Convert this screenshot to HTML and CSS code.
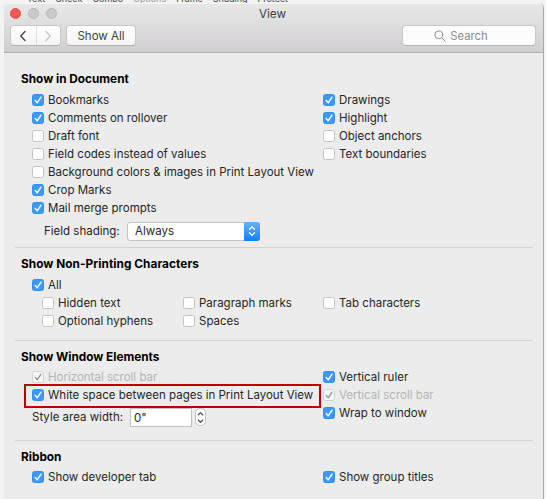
FILE: index.html
```
<!DOCTYPE html>
<html lang="en">
<head>
<meta charset="utf-8">
<title>View</title>
<link rel="stylesheet" href="styles.css">
</head>
<body>
<svg width="0" height="0" class="defs"><symbol id="tick" viewBox="0 0 12 12"><path d="M3.2 6.4 5.2 8.8 9 3.2" fill="none" stroke="currentColor" stroke-width="1.4" stroke-linecap="round" stroke-linejoin="round"/></symbol></svg>
<div class="backdrop"><span>Text</span><span>Check</span><span>Combo</span><span class="dim">Options</span><span>Frame</span><span>Shading</span><span>Protect</span></div>
<div class="window">
  <header class="titlebar">
    <div class="caption"><div class="lights"><i class="close"></i><i></i><i></i></div><h1>View</h1></div>
    <div class="toolbar">
      <div class="nav">
        <button><svg width="8" height="12" viewBox="0 0 8 12"><path d="M6 1.5 1.8 6 6 10.5"/></svg></button>
        <button class="off"><svg width="8" height="12" viewBox="0 0 8 12"><path d="M2 1.5 6.2 6 2 10.5"/></svg></button>
      </div>
      <button class="show-all">Show All</button>
      <div class="search"><svg width="12" height="12" viewBox="0 0 12 12"><circle cx="4.8" cy="4.8" r="3.9"/><path d="M7.7 7.7 11.2 11.2"/></svg><span>Search</span></div>
    </div>
  </header>
  <main>
    <section class="document">
      <h2>Show in Document</h2>
      <div class="cols">
        <div>
          <label class="on"><b><svg><use href="#tick"/></svg></b><span>Bookmarks</span></label>
          <label class="on"><b><svg><use href="#tick"/></svg></b><span>Comments on rollover</span></label>
          <label><b></b><span>Draft font</span></label>
          <label><b></b><span>Field codes instead of values</span></label>
          <label><b></b><span>Background colors &amp; images in Print Layout View</span></label>
          <label class="on"><b><svg><use href="#tick"/></svg></b><span>Crop Marks</span></label>
          <label class="on"><b><svg><use href="#tick"/></svg></b><span>Mail merge prompts</span></label>
        </div>
        <div>
          <label class="on"><b><svg><use href="#tick"/></svg></b><span>Drawings</span></label>
          <label class="on"><b><svg><use href="#tick"/></svg></b><span>Highlight</span></label>
          <label><b></b><span>Object anchors</span></label>
          <label><b></b><span>Text boundaries</span></label>
        </div>
      </div>
      <div class="shading"><span>Field shading:</span><div class="select"><span>Always</span><i><svg width="8" height="12" viewBox="0 0 8 12"><path d="M1.5 4.2 4 1.7 6.5 4.2M1.5 7.8 4 10.3 6.5 7.8"/></svg></i></div></div>
    </section>
    <section class="nonprinting">
      <h2>Show Non-Printing Characters</h2>
      <label class="on"><b><svg><use href="#tick"/></svg></b><span>All</span></label>
      <div class="three">
        <label><b></b><span>Hidden text</span></label>
        <label><b></b><span>Paragraph marks</span></label>
        <label><b></b><span>Tab characters</span></label>
        <label><b></b><span>Optional hyphens</span></label>
        <label><b></b><span>Spaces</span></label>
      </div>
    </section>
    <section class="elements">
      <h2>Show Window Elements</h2>
      <div class="cols">
        <div>
          <label class="on disabled"><b><svg><use href="#tick"/></svg></b><span>Horizontal scroll bar</span></label>
          <label class="on marked"><b><svg><use href="#tick"/></svg></b><span>White space between pages in Print Layout View</span></label>
          <div class="width"><span>Style area width:</span><div class="field">0"</div><div class="stepper"><svg width="7" height="13" viewBox="0 0 7 13"><path d="M1.2 4 3.5 1.7 5.8 4M1.2 9 3.5 11.3 5.8 9"/></svg></div></div>
        </div>
        <div>
          <label class="on"><b><svg><use href="#tick"/></svg></b><span>Vertical ruler</span></label>
          <label class="on disabled"><b><svg><use href="#tick"/></svg></b><span>Vertical scroll bar</span></label>
          <label class="on"><b><svg><use href="#tick"/></svg></b><span>Wrap to window</span></label>
        </div>
      </div>
    </section>
    <section class="ribbon">
      <h2>Ribbon</h2>
      <div class="cols">
        <label class="on"><b><svg><use href="#tick"/></svg></b><span>Show developer tab</span></label>
        <label class="on"><b><svg><use href="#tick"/></svg></b><span>Show group titles</span></label>
      </div>
    </section>
  </main>
</div>
</body>
</html>
```

FILE: styles.css
```
*, *::after { box-sizing: border-box; }
body { margin: 0; width: 546px; height: 499px; overflow: hidden; background: #f3f3f3; font: 11.5px/18px Inter, "Liberation Sans", sans-serif; color: #262626; }
svg { fill: none; stroke: currentColor; stroke-linecap: round; stroke-linejoin: round; display: block; }
.defs { position: absolute; }
.backdrop { height: 3px; display: flex; gap: 10px; padding-left: 27px; overflow: hidden; line-height: 12px; font-size: 9px; align-items: flex-start; color: #444; }
.backdrop span { margin-top: -7px; height: 12px; }
.backdrop .dim { color: #999; }
.window { width: 540px; height: 496px; margin-left: 4px; background: #ececec; border-right: 1px solid #a9a9ab; border-top-right-radius: 5px; border-top-left-radius: 4px; }
.titlebar { height: 50px; background: linear-gradient(#e9e8e9, #d1cfd1); border-bottom: 1px solid #b1afb1; border-top: 1px solid #f5f5f5; border-radius: 4px 5px 0 0; }
.caption { height: 21px; display: grid; grid-template-columns: 1fr; align-items: center; }
.caption > * { grid-area: 1 / 1; }
.lights { display: flex; gap: 7px; padding-left: 6px; margin-top: -2px; }
.lights i { width: 11px; height: 11px; border-radius: 50%; background: #cbcacb; border: 1px solid #b8b7b8; }
.lights .close { background: #fc5753; border-color: #e8504c; }
h1 { margin: 0; padding-right: 2px; text-align: center; font-size: 11.7px; font-weight: 400; line-height: 18px; margin-top: -1px; color: #404040; }
.toolbar { display: flex; height: 21px; padding: 0 7px 0 6px; }
button { border: 0; margin: 0; padding: 0; font: inherit; font-size: 11.5px; background: none; color: #404040; }
.nav, .show-all, .search { height: 21px; background: linear-gradient(#fff, #f5f5f5); border: 1px solid #c8c6c8; border-bottom-color: #b2b0b2; border-radius: 4px; }
.nav { width: 51px; display: grid; grid-template-columns: 1fr 1fr; margin-right: 5px; }
.nav button { display: grid; place-items: center; }
.nav svg { stroke-width: 1.3; }
.nav .off { color: #c4c4c4; border-left: 1px solid #dedede; }
.show-all { width: 70px; }
.search { width: 134px; margin-left: auto; background: #fcfcfc; display: flex; align-items: center; justify-content: center; gap: 4px; color: #8c8c8c; padding-right: 16px; font-size: 11.3px; }
main { padding-left: 11px; padding-right: 10px; }
section { padding-left: 6px; border-bottom: 1px solid #d2d2d2; }
h2 { margin: 0; font-size: 11.8px; line-height: 18px; font-weight: 700; color: #000; }
.nonprinting h2 { letter-spacing: .06px; }
.document { height: 195px; padding-top: 17px; }
.cols { display: grid; grid-template-columns: 291px 1fr; padding-left: 11px; margin-top: 3px; }
label { display: flex; align-items: center; gap: 4px; height: 18px; white-space: nowrap; }
label b { width: 12px; height: 12px; flex: none; background: #fff; border: 1px solid #c2c2c2; border-radius: 2.5px; }
label svg { width: 12px; height: 12px; margin: -1px; color: #fff; }
.on b { background: #3b99fc; border-color: #338ff3; }
.disabled { color: #b4b4b4; }
.disabled b { background: #f6f6f6; border-color: #d2d2d2; }
.disabled svg { color: #999; }
.shading { display: flex; align-items: center; margin: 4px 0 0 23px; height: 20px; }
.shading > span { width: 83px; }
.select { width: 133px; height: 19px; border: 1px solid #c3c3c3; border-radius: 3px; background: #fff; display: flex; align-items: center; padding-left: 7px; }
.select i { margin: -1px -1px -1px auto; width: 16px; height: 19px; background: linear-gradient(#68b2fa, #157efb); border-radius: 0 3px 3px 0; color: #fff; display: grid; place-items: center; }
.select svg { stroke-width: 1.3; }
.stepper svg { stroke-width: 1.1; color: #444; }
.nonprinting { height: 93px; padding-top: 7px; }
.nonprinting > label { margin: 3px 0 0 11px; }
.three { display: grid; grid-template-columns: 141px 140px 1fr; padding-left: 21px; }
.elements { height: 100px; padding-top: 7px; }
.elements .cols, .ribbon .cols { margin-top: 2px; }
.marked { position: relative; }
.marked::after { content: ""; position: absolute; left: -8px; top: -2px; width: 297px; height: 24px; border: 2px solid #bf0003; }
.width { display: flex; height: 20px; margin-top: 3px; align-items: center; }
.width > span { width: 98px; }
.field { width: 62px; height: 19px; background: #fff; border: 1px solid #c0c0c0; padding-left: 3px; line-height: 18px; }
.stepper { width: 11px; height: 18px; margin-left: 3px; border: 1px solid #c0c0c0; border-radius: 5px; background: #fff; display: grid; place-items: center; }
.ribbon { padding-top: 7px; border: 0; }
```
